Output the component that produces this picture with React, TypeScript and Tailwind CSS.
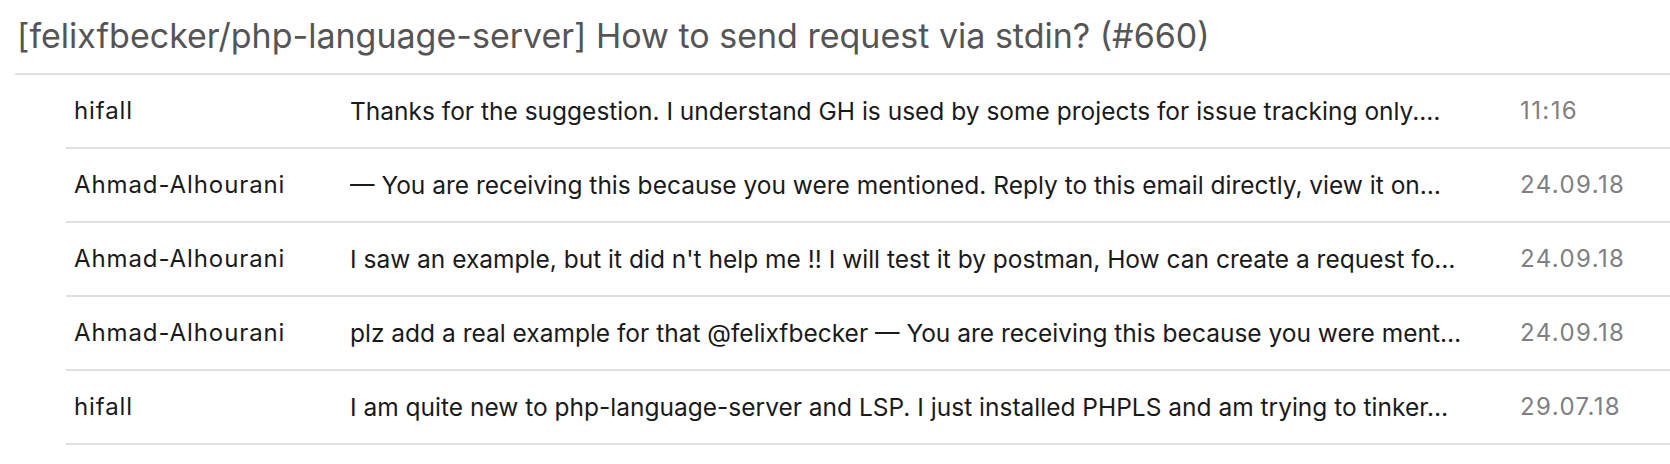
// Thread view: issue title with list of messages

interface Message {
    author: string;
    preview: string;
    date: string;
}

const MESSAGES: Message[] = [
    { author: 'hifall', preview: 'Thanks for the suggestion. I understand GH is used by some projects for issue tracking only.…', date: '11:16' },
    { author: 'Ahmad-Alhourani', preview: '— You are receiving this because you were mentioned. Reply to this email directly, view it on…', date: '24.09.18' },
    { author: 'Ahmad-Alhourani', preview: "I saw an example, but it did n't help me !! I will test it by postman, How can create a request fo…", date: '24.09.18' },
    { author: 'Ahmad-Alhourani', preview: 'plz add a real example for that @felixfbecker — You are receiving this because you were ment…', date: '24.09.18' },
    { author: 'hifall', preview: 'I am quite new to php-language-server and LSP. I just installed PHPLS and am trying to tinker…', date: '29.07.18' },
];

function MessageRow({ msg }: { msg: Message }) {
    return (
        <div className="flex items-center h-[74px] border-b-2 border-[#e0e0e0] text-[24px] leading-normal">
            <div className="w-[284px] pl-2 shrink-0 text-[#1a1a1a] tracking-[0.9px]">{msg.author}</div>
            <div className="w-[1150px] shrink-0 whitespace-nowrap overflow-hidden text-[#1a1a1a] text-[24.5px]">{msg.preview}</div>
            <div className="pl-[20px] text-[#808080] tracking-[1.4px]">{msg.date}</div>
        </div>
    );
}

export default function App() {
    return (
        <div className="bg-white min-h-[464px] font-['Inter',sans-serif]">
            <div className="pl-[15px]">
                <h1 className="pl-[2px] pt-[14px] pb-[16px] text-[34px] leading-[43px] text-[#555555] font-normal border-b-2 border-[#e0e0e0] whitespace-nowrap">
                    [felixfbecker/php-language-server] How to send request via stdin? (#660)
                </h1>
            </div>
            <div className="pl-[66px]">
                {MESSAGES.map((m, i) => <MessageRow key={i} msg={m} />)}
            </div>
        </div>
    );
}
